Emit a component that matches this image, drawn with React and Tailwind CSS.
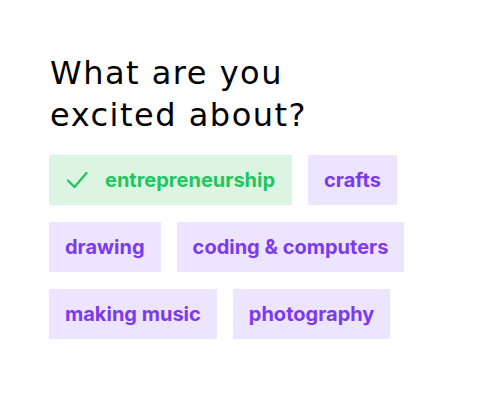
const topics = [
  { label: 'entrepreneurship', selected: true },
  { label: 'crafts' },
  { label: 'drawing' },
  { label: 'coding & computers' },
  { label: 'making music' },
  { label: 'photography' },
];

function CheckMark() {
  return (
    <svg width="22" height="18" viewBox="0 0 22 18" fill="none" stroke="currentColor" strokeWidth="2.3" strokeLinecap="round" strokeLinejoin="round">
      <polyline points="2,9.5 8.5,16 20.5,2" />
    </svg>
  );
}

function Chip({ label, selected }) {
  if (selected) {
    return (
      <div className="h-[50px] flex items-center gap-[17px] pl-[17px] pr-[17px] bg-[#dcf5e3] text-[#22c55e]">
        <CheckMark />
        <span className="text-[20px] font-bold leading-none">{label}</span>
      </div>
    );
  }
  return (
    <div className="h-[50px] flex items-center px-[16px] bg-[#ede5ff] text-[#7c3aed]">
      <span className="text-[20px] font-bold leading-none">{label}</span>
    </div>
  );
}

export default function App() {
  return (
    <div className="w-[500px] h-[402px] bg-white pl-[49px] pt-[52px] font-['Inter',sans-serif]">
      <h1 className="font-['DejaVu_Sans',sans-serif] text-[32px] leading-[42px] font-normal tracking-[1.5px] text-black pl-px">
        What are you
        <br />
        excited about?
      </h1>

      {/* Topic chips */}
      <div className="mt-[19px] w-[380px] flex flex-wrap gap-x-[16px] gap-y-[17px]">
        {topics.map((t) => (
          <Chip key={t.label} {...t} />
        ))}
      </div>
    </div>
  );
}
